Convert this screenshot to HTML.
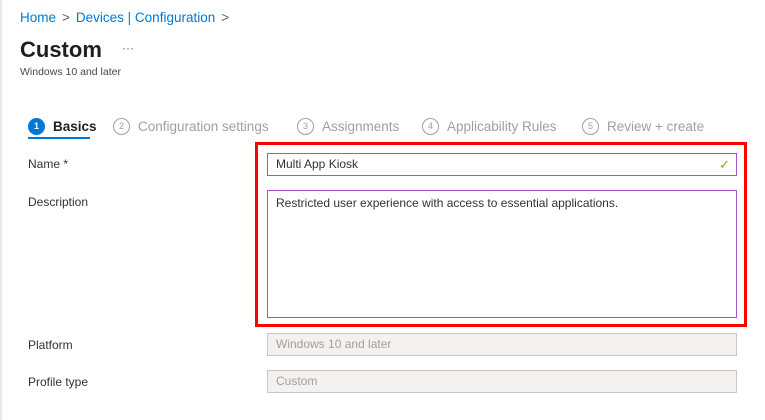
<!DOCTYPE html>
<html><head><style>
body{margin:0;width:765px;height:420px;background:#fff;font-family:"Liberation Sans",sans-serif;position:relative;overflow:hidden;color:#323130}
.a{position:absolute;white-space:nowrap}
.bc{top:10px;left:20px;font-size:13.5px;color:#0078d4}
.bc span{color:#605e5c;margin:0 6px}
.t{top:37px;left:20px;font-size:22px;font-weight:bold;color:#201f1e}
.s{top:66px;left:20px;font-size:10.5px;color:#484644}
.step{top:118px;font-size:13.5px;color:#a19f9d;line-height:17px}
.c{display:inline-block;width:15px;height:15px;border:1px solid #a19f9d;border-radius:50%;font-size:9px;text-align:center;line-height:15px;vertical-align:middle;margin-right:8px;position:relative;top:-1px}
.lbl{font-size:12px;color:#323130;left:28px}
.box{position:absolute;box-sizing:border-box;font-size:12px;padding:0 8px}
</style></head><body>
<div class="a" style="left:0;top:0;width:2px;height:420px;background:#e8e8e8"></div>
<div class="a bc">Home<span>&gt;</span>Devices | Configuration<span>&gt;</span></div>
<div class="a t">Custom <span style="font-size:12px;font-weight:normal;color:#605e5c;margin-left:14px;vertical-align:5px">···</span></div>
<div class="a s">Windows 10 and later</div>
<div class="a step" style="left:28px;color:#201f1e;font-weight:bold"><span class="c" style="background:#0078d4;border-color:#0078d4;color:#fff;font-weight:bold">1</span>Basics</div>
<div class="a" style="left:28px;top:137px;width:62px;height:2px;background:#0078d4"></div>
<div class="a step" style="left:113px"><span class="c">2</span>Configuration settings</div>
<div class="a step" style="left:297px"><span class="c">3</span>Assignments</div>
<div class="a step" style="left:422px"><span class="c">4</span>Applicability Rules</div>
<div class="a step" style="left:582px"><span class="c">5</span>Review + create</div>
<div class="a lbl" style="top:157px">Name *</div>
<div class="a lbl" style="top:195px">Description</div>
<div class="a lbl" style="top:338px">Platform</div>
<div class="a lbl" style="top:375px">Profile type</div>
<div class="a" style="left:255px;top:142px;width:486px;height:179px;border:3px solid #f00"></div>
<div class="box" style="left:267px;top:153px;width:470px;height:23px;border:1px solid #a656c9;line-height:21px">Multi App Kiosk<span style="position:absolute;right:6px;color:#6bb700;font-size:13px">✓</span></div>
<div class="box" style="left:267px;top:190px;width:470px;height:128px;border:1px solid #a656c9;padding-top:5px">Restricted user experience with access to essential applications.</div>
<div class="box" style="left:267px;top:333px;width:470px;height:23px;border:1px solid #c8c6c4;background:#f3f2f1;color:#a19f9d;line-height:21px">Windows 10 and later</div>
<div class="box" style="left:267px;top:370px;width:470px;height:23px;border:1px solid #c8c6c4;background:#f3f2f1;color:#a19f9d;line-height:21px">Custom</div>
</body></html>
